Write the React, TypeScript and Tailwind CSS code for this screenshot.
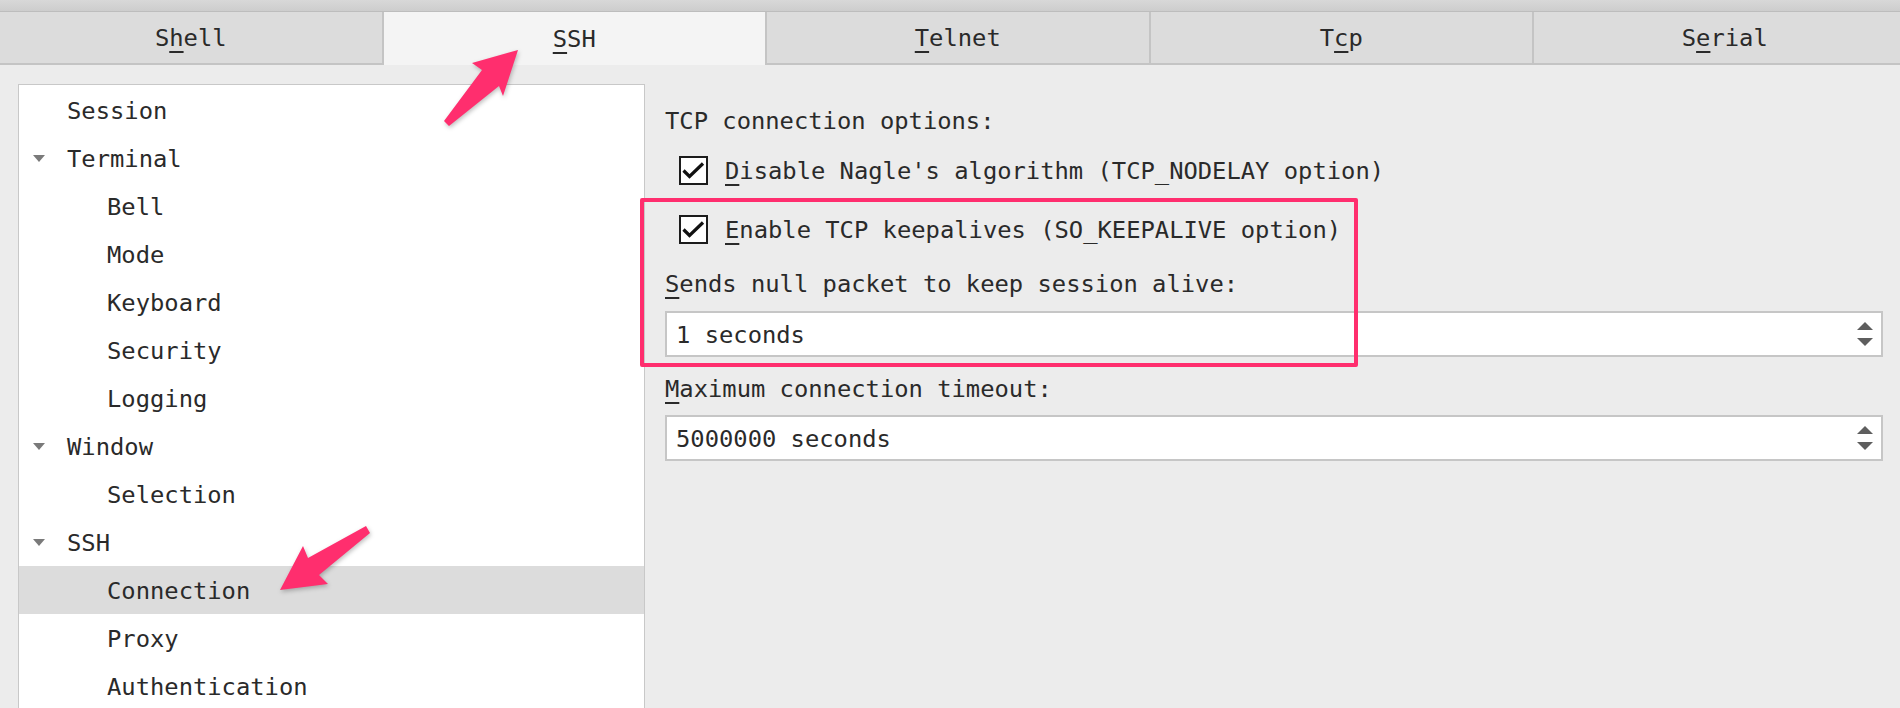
import React from "react";

const mono = { fontFamily: '"DejaVu Sans Mono", "Liberation Mono", monospace' };

// label with one underlined mnemonic letter
function Mn({ text, at }: { text: string; at: number }) {
  return (
    <>
      {text.slice(0, at)}
      <span className="underline decoration-[1.5px] underline-offset-[5px]">{text[at]}</span>
      {text.slice(at + 1)}
    </>
  );
}

const tabs = [
  { text: "Shell", at: 1 },
  { text: "SSH", at: 0 },
  { text: "Telnet", at: 0 },
  { text: "Tcp", at: 1 },
  { text: "Serial", at: 1 },
];

const tree: { label: string; level: number; open?: boolean; selected?: boolean }[] = [
  { label: "Session", level: 0 },
  { label: "Terminal", level: 0, open: true },
  { label: "Bell", level: 1 },
  { label: "Mode", level: 1 },
  { label: "Keyboard", level: 1 },
  { label: "Security", level: 1 },
  { label: "Logging", level: 1 },
  { label: "Window", level: 0, open: true },
  { label: "Selection", level: 1 },
  { label: "SSH", level: 0, open: true },
  { label: "Connection", level: 1, selected: true },
  { label: "Proxy", level: 1 },
  { label: "Authentication", level: 1 },
];

function Checkbox() {
  return (
    <div className="w-[29px] h-[29px] border-2 border-[#1c1c1c] bg-white flex items-center justify-center shrink-0">
      <svg width="24" height="24" viewBox="0 0 24 24">
        <polyline points="1.5,12.5 7.5,18.5 21,5.5" fill="none" stroke="#111" strokeWidth="3.2" />
      </svg>
    </div>
  );
}

function Spin({ value }: { value: string }) {
  return (
    <div className="h-[46px] border-2 border-[#c6c6c6] bg-white flex items-center pl-[9px] pr-[8px]">
      <span className="flex-1 pt-[3px]">{value}</span>
      <div className="flex flex-col gap-[8px] items-center">
        <svg width="16" height="8" viewBox="0 0 16 8">
          <polygon points="0,8 16,8 8,0" fill="#5e5e5e" />
        </svg>
        <svg width="16" height="8" viewBox="0 0 16 8">
          <polygon points="0,0 16,0 8,8" fill="#5e5e5e" />
        </svg>
      </div>
    </div>
  );
}

export default function App() {
  return (
    <div
      className="relative w-[1900px] h-[708px] overflow-hidden bg-[#ececec] text-[23.8px] text-[#2a2a2a] leading-none"
      style={mono}
    >
      {/* title strip */}
      <div className="h-[12px] bg-gradient-to-b from-[#d8d8d8] to-[#cdcdcd] border-b border-[#bdbdbd]" />

      {/* tabs */}
      <div className="flex h-[53px] overflow-hidden">
        {tabs.map((t, i) => (
          <div
            key={t.text}
            className={
              "w-[383.5px] shrink-0 flex items-center justify-center pt-[3px] border-r-2 border-[#c4c4c4] " +
              (i === 1 ? "bg-[#f4f4f4]" : "bg-[#dcdcdc] border-b-2")
            }
          >
            <span>
              <Mn text={t.text} at={t.at} />
            </span>
          </div>
        ))}
      </div>

      <div className="flex pt-[19px] pl-[18px] pr-[17px]">
        {/* tree */}
        <div className="w-[627px] h-[640px] shrink-0 bg-white border border-[#c8c8c8] pt-[1px]">
          {tree.map((r) => (
            <div
              key={r.label}
              className={"h-[48px] flex items-center " + (r.selected ? "bg-[#dcdcdc]" : "")}
            >
              {r.level === 0 ? (
                <>
                  <div className="w-[13px] ml-[13px] mr-[22px] flex justify-center">
                    {r.open && (
                      <svg width="12" height="7" viewBox="0 0 12 7">
                        <polygon points="0,0 12,0 6,7" fill="#7a7a7a" />
                      </svg>
                    )}
                  </div>
                  <span className="pt-[4px]">{r.label}</span>
                </>
              ) : (
                <span className="pl-[88px] pt-[4px]">{r.label}</span>
              )}
            </div>
          ))}
        </div>

        {/* options */}
        <div className="flex-1 ml-[20px] pt-[16px] flex flex-col">
          <div className="h-[40px] flex items-center pt-[3px]">TCP connection options:</div>
          <div className="h-[60px] flex items-center pl-[14px] gap-[17px]">
            <Checkbox />
            <span className="pt-[3px]">
              <Mn text="Disable Nagle's algorithm (TCP_NODELAY option)" at={0} />
            </span>
          </div>
          <div className="h-[58px] flex items-center pl-[14px] gap-[17px]">
            <Checkbox />
            <span className="pt-[3px]">
              <Mn text="Enable TCP keepalives (SO_KEEPALIVE option)" at={0} />
            </span>
          </div>
          <div className="h-[50px] flex items-center pt-[3px]">
            <span>
              <Mn text="Sends null packet to keep session alive:" at={0} />
            </span>
          </div>
          <div className="mt-[3px]">
            <Spin value="1 seconds" />
          </div>
          <div className="h-[44px] mt-[9px] flex items-center pt-[3px]">
            <span>
              <Mn text="Maximum connection timeout:" at={0} />
            </span>
          </div>
          <div className="mt-[5px]">
            <Spin value="5000000 seconds" />
          </div>
        </div>
      </div>

      {/* annotation: highlight box */}
      <div className="absolute left-[640px] top-[198px] w-[718px] h-[169px] border-4 border-[#ff2e6e] rounded-[2px]" />

      {/* annotation: arrows */}
      <svg
        className="absolute left-0 top-0 pointer-events-none"
        width="1900"
        height="708"
        style={{ filter: "drop-shadow(1px 2px 2px rgba(0,0,0,0.25))" }}
      >
        <polygon
          points="444,121 482,70 472,63 518,50 503,96 499,86 449,126"
          fill="#ff2e6e"
        />
        <polygon
          points="366,526 308,558 303,546 280,590 328,584 319,575 370,533"
          fill="#ff2e6e"
        />
      </svg>
    </div>
  );
}
